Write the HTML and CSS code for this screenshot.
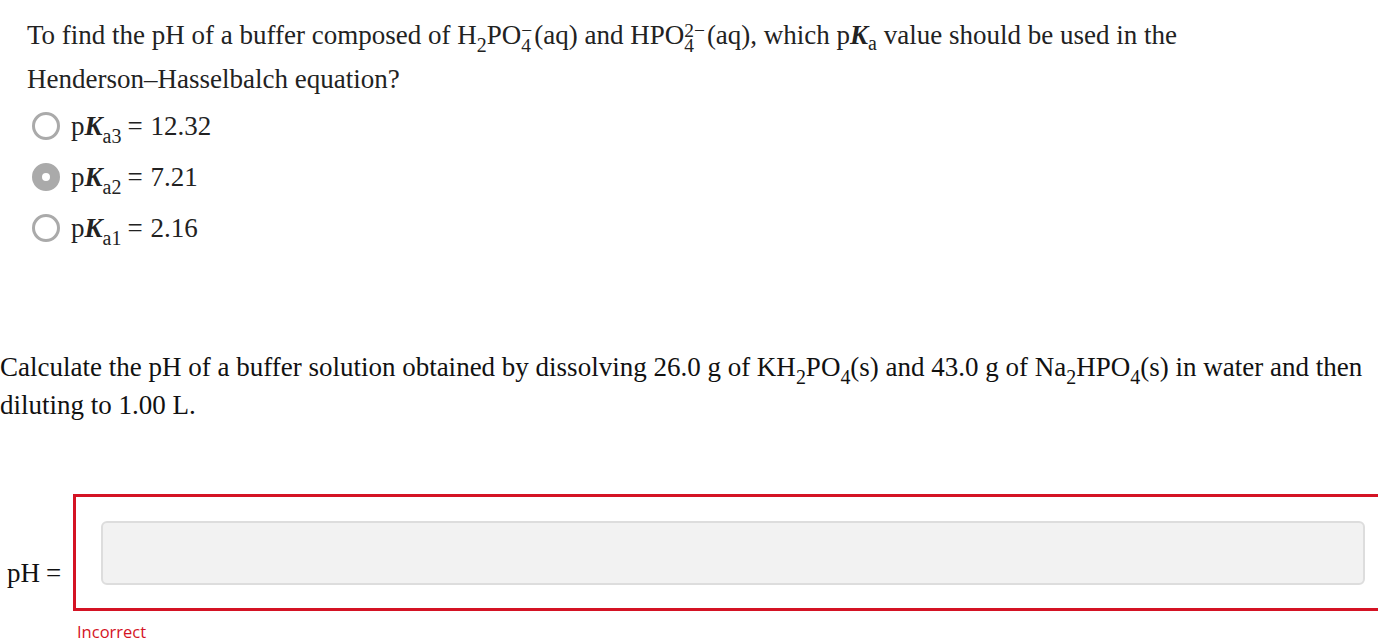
FILE: index.html
```html
<!DOCTYPE html>
<html lang="en">

<head>
    <meta charset="UTF-8">
    <title>Buffer pH</title>
    <link rel="stylesheet" href="styles.css">
</head>

<body>
    <div class="question first">
        <p class="prompt">
            To find the pH of a buffer composed of H<sub>2</sub>PO<span class="ion"><span>&minus;</span><span>4</span></span>(aq)
            and HPO<span class="ion"><span>2&minus;</span><span>4</span></span>(aq), which p<i>K</i><sub class="ka">a</sub>
            value should be used in the Henderson&ndash;Hasselbalch equation?
        </p>
        <ul class="choices">
            <li><span class="radio"></span><span class="choice">p<i>K</i><sub>a3</sub><span class="eq">=</span>12.32</span></li>
            <li><span class="radio checked"></span><span class="choice">p<i>K</i><sub>a2</sub><span class="eq">=</span>7.21</span></li>
            <li><span class="radio"></span><span class="choice">p<i>K</i><sub>a1</sub><span class="eq">=</span>2.16</span></li>
        </ul>
    </div>

    <div class="question second">
        <p class="prompt">
            Calculate the pH of a buffer solution obtained by dissolving 26.0 g of KH<sub>2</sub>PO<sub>4</sub>(s)
            and 43.0 g of Na<sub>2</sub>HPO<sub>4</sub>(s) in water and then diluting to 1.00 L.
        </p>
        <div class="answer">
            <span class="label">pH<span class="eq">=</span></span>
            <div class="field wrong">
                <div class="input"></div>
            </div>
        </div>
        <div class="feedback">Incorrect</div>
    </div>
</body>

</html>
```

FILE: styles.css
```css
html,
body {
    overflow: hidden;
}

body {
    margin: 0;
    background-color: #fff;
    font-family: "Liberation Serif", "Times New Roman", serif;
    color: #222;
}

.prompt {
    margin: 0;
    font-size: 27px;
}

i {
    font-weight: bold;
}

sub {
    font-size: 0.74em;
    line-height: 0;
    vertical-align: -8px;
}

sub.ka {
    vertical-align: -6px;
}

.eq {
    margin: 0 8px 0 6px;
}

/* stacked charge over subscript, e.g. PO4 with 2- on top */
.ion {
    display: inline-block;
    font-size: 0.72em;
    line-height: 15px;
    vertical-align: -8px;
    margin-right: 2px;
}

.ion span {
    display: block;
}

/* first block */
.first {
    padding: 13px 0 0 27px;
    width: 1190px;
}

.first .prompt {
    line-height: 44px;
}

.choices {
    list-style: none;
    margin: 0;
    padding: 0;
}

.choices li {
    display: flex;
    align-items: center;
    height: 51px;
    margin-left: 5px;
}

.choice {
    font-size: 27px;
}

.radio {
    width: 22px;
    height: 22px;
    border: 3px solid #aaa;
    border-radius: 50%;
    margin-right: 11px;
    flex-shrink: 0;
    margin-top: -2px;
}

.radio.checked {
    width: 8px;
    height: 8px;
    border: 10px solid #aaa;
    background-color: #fff;
}

/* second block */
.second {
    margin-top: 94px;
    color: #111;
}

.second .prompt {
    line-height: 38px;
}

.answer {
    display: flex;
    margin-top: 70px;
}

.label {
    align-self: flex-end;
    margin-bottom: 22px;
    padding-left: 7px;
    width: 66px;
    font-size: 27px;
    white-space: nowrap;
}

.label .eq {
    margin: 0 0 0 6px;
}

.field {
    flex: 1;
    padding: 24px 25px 23px 25px;
    margin-right: -15px;
}

.field.wrong {
    border: 3px solid #d41324;
}

.input {
    height: 60px;
    background-color: #f2f2f2;
    border: 2px solid #ddd;
    border-radius: 6px;
}

.feedback {
    margin: 9px 0 0 77px;
    font-family: "Open Sans", "Noto Sans", sans-serif;
    font-size: 16.5px;
    color: #d41324;
}
```
